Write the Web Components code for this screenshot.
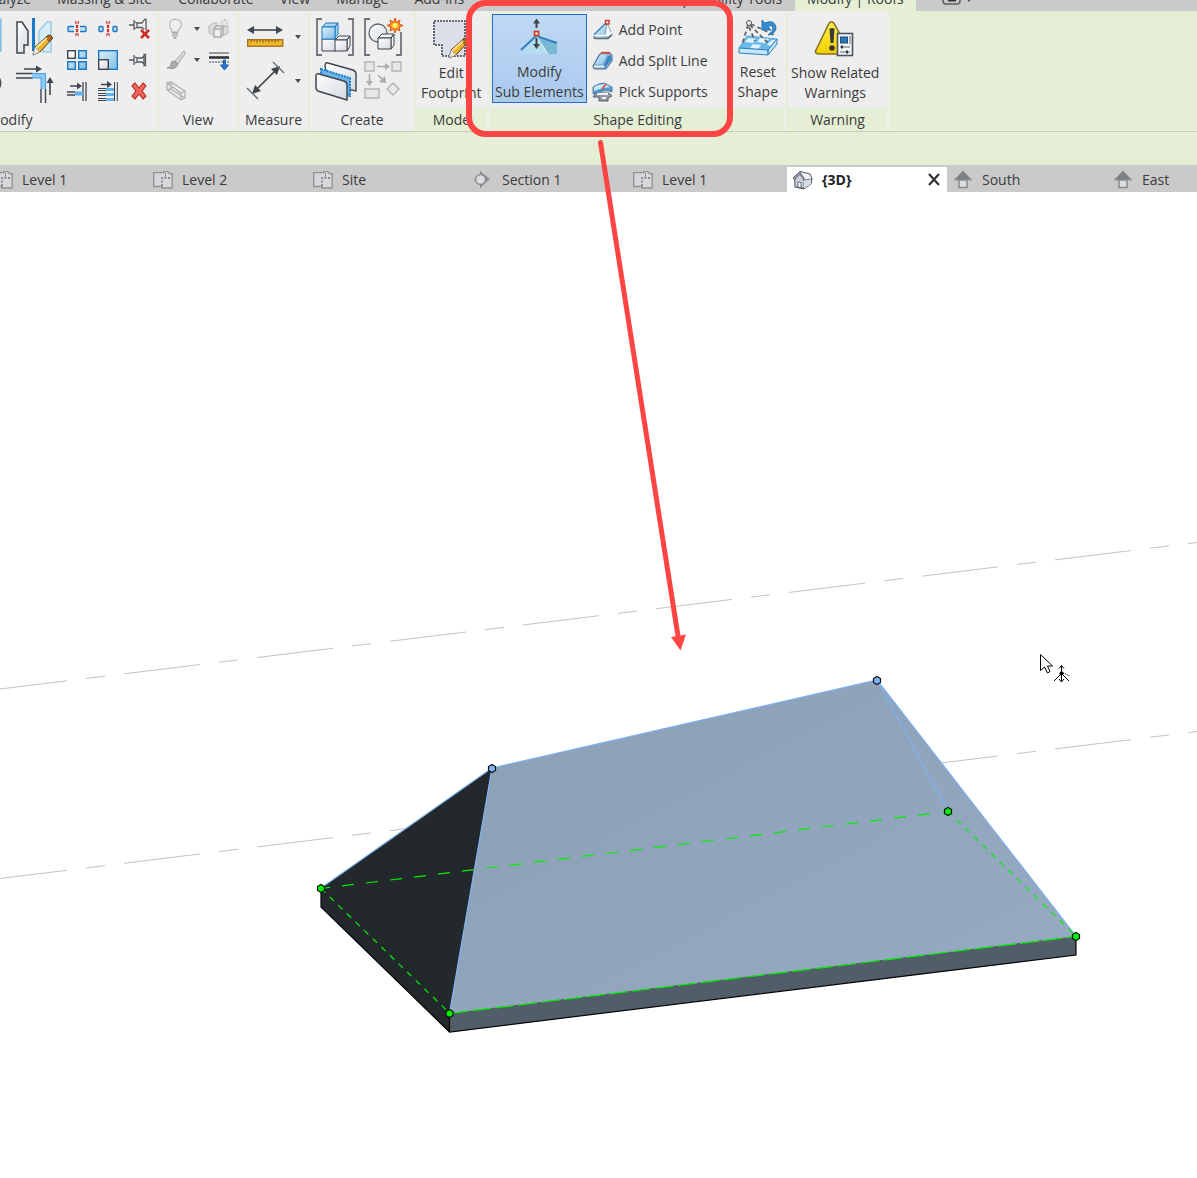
<!DOCTYPE html>
<html lang="en"><head><meta charset="utf-8"><title>Modify | Roofs</title>
<style>
html,body{margin:0;height:100%}
body{font-family:"Open Sans","Noto Sans",sans-serif;font-size:14px;line-height:20px;color:#3b3b3b;overflow:hidden;background:#fff}
</style></head><body>
<revit-app></revit-app>
<script>
const shared=`*{box-sizing:border-box}button{font:inherit;color:inherit;background:none;border:0;padding:0;margin:0;cursor:pointer}svg{display:block;overflow:visible}`;
function define(name,html,css){
  const t=document.createElement('template');
  t.innerHTML='<style>'+shared+css+'</style>'+html;
  customElements.define(name,class extends HTMLElement{
    constructor(){super();this.attachShadow({mode:'open'}).append(t.content.cloneNode(true));}
  });
}
const D='#3f454d',B='#1b78c8';
const defs=`<defs>
<linearGradient id="b" x1="0" y1="0" x2="1" y2="1"><stop offset="0" stop-color="#dff0fa"/><stop offset="1" stop-color="#7fbde3"/></linearGradient>
<linearGradient id="w" x1="0" y1="0" x2="1" y2="1"><stop offset="0" stop-color="#fff"/><stop offset="1" stop-color="#d5d9df"/></linearGradient>
<linearGradient id="y" x1="0" y1="0" x2="0" y2="1"><stop offset="0" stop-color="#fff04a"/><stop offset="1" stop-color="#f3cf00"/></linearGradient></defs>`;
const pencil=`<path d="M17 38l2-8L32 18.500q3-1 4.500 3L24 35z" fill="#f2b32c" stroke="#4b3f2e"/><path d="M29.500 21l2.800-2.700q3.500-.5 4.200 3.200l-3 3z" fill="#b56a24" stroke="#4b3f2e"/><path d="M20 31l11-10" stroke="#ffe38c" stroke-width="2"/><path d="M17 38l2-8 5 5z" fill="#f7f3e8" stroke="#999"/>`;
const ICONS={
edgeblue:[4,36,`<rect x="-6" y="2" width="7" height="32" fill="url(#b)" stroke="#6db2e2"/>`],
edgering:[4,30,`<circle cx="-8" cy="14" r="8" fill="none" stroke="#50565e" stroke-width="3"/>`],
mirror:[38,40,`<path d="M1 5h5l6 9v14H8v8H1z" fill="url(#w)" stroke="${D}" stroke-width="1.500"/><path d="M35 5h-4l-8 9v14h4v7h8z" fill="#d9edf7" stroke="#9bcbe2" stroke-width="1.500"/><path d="M17.500 1v33" stroke="${B}" stroke-width="3"/>${pencil}`],
trim:[38,38,`<path d="M8 4h14M34 30V16" stroke="${D}" stroke-width="1.600" fill="none"/><path d="M20 .500l6 3.500-6 3.500zM30.500 18l3.500-6 3.500 6z" fill="${D}"/><path d="M0 8.500h17M0 13h17M25 24v14M29.500 24v14" stroke="${D}" stroke-width="1.400"/><path d="M16 10.700h11.300V24" fill="none" stroke="#4fa8ea" stroke-width="5.500"/><path d="M16 10.700h11.300V24" fill="none" stroke="#93cdf6" stroke-width="3"/>`],
split:[20,20,`<path d="M7 7.500H2q-1 0-1 1v3q0 1 1 1h5M13 7.500h5q1 0 1 1v3q0 1-1 1h-5" fill="#bfe0f3" stroke="${B}" stroke-width="1.400"/><path d="M8.500 2l1 5v6l-1 5M11.500 2l-1 5v6l1 5" stroke="#d2302a" fill="none" stroke-width="1.200" stroke-dasharray="3 1"/>`],
splitgap:[20,20,`<rect x="1" y="7.500" width="4" height="5" rx="1" fill="#bfe0f3" stroke="${B}" stroke-width="1.400"/><rect x="15" y="7.500" width="4" height="5" rx="1" fill="#bfe0f3" stroke="${B}" stroke-width="1.400"/><path d="M8.500 2l1 5v6l-1 5M11.500 2l-1 5v6l1 5" stroke="#d2302a" fill="none" stroke-width="1.200" stroke-dasharray="3 1"/>`],
unpin:[20,20,`<path d="M0 6h5M5 1v10M6 3l2 1h5l2-3M6 9.500l2-1h5l2 2M15 .500h2v11M8 4v4.500" fill="none" stroke="#555a60" stroke-width="1.300"/><path d="M12 11l8 8M20 11l-8 8" stroke="#c92d26" stroke-width="2.500"/>`],
pin:[20,20,`<path d="M0 10h5M5 5v10M6 7l2 1h5l2-2M6 13l2-1h5l2 2M8 8v4M15 4.500h1.500v11H15z" fill="none" stroke="#555a60" stroke-width="1.300"/>`],
array:[20,20,`<rect x=".700" y=".700" width="7.600" height="7.600" fill="#f6f7fa" stroke="${D}" stroke-width="1.400"/><path d="M11.700.700h7.600v7.600h-7.600zM.700 11.700h7.600v7.600H.700zM11.700 11.700h7.600v7.600h-7.600z" fill="url(#b)" stroke="${B}" stroke-width="1.400"/>`],
scale:[20,20,`<rect x=".700" y=".700" width="18.600" height="18.600" fill="url(#b)" stroke="${B}" stroke-width="1.400"/><rect x=".700" y="9.700" width="9.600" height="9.600" fill="url(#w)" stroke="${D}" stroke-width="1.400"/>`],
extend:[20,20,`<path d="M3 5h9" stroke="${D}" stroke-width="1.500"/><path d="M10 1.500l5 3.500-5 3.500z" fill="${D}"/><path d="M16 1v19M19 1v19M0 11h8M0 14h8" stroke="${D}" stroke-width="1.300"/><path d="M8 12.500h8" stroke="#62b4ee" stroke-width="4"/>`],
extendm:[20,20,`<path d="M3 3.500h8" stroke="${D}" stroke-width="1.500"/><path d="M9 0l5 3.500L9 7z" fill="${D}"/><path d="M16.500 1v19M19.300 1v19M0 7.500h8M0 9.500h8M0 12.500h8M0 14.500h8M0 17.500h8M0 19.500h8" stroke="${D}"/><path d="M8 8.500h8M8 13.500h8M8 18.500h8" stroke="#62b4ee" stroke-width="2.800"/>`],
del:[20,20,`<path d="M3 5l3-3 4 5 4-5 3 3-4 5 4 5-3 3-4-5-4 5-3-3 4-5z" fill="#f0665c" stroke="#bb2d27" stroke-width="1.200" stroke-linejoin="round"/>`],
bulb:[20,20,`<path d="M6 13q0-3-2-4-2-8 5-9 8 1 6 8-3 2-3 5z" fill="#eee" stroke="#c0c0c0" stroke-width="1.400"/><path d="M6 14h6M6 16.500h6M7.500 19h3" fill="none" stroke="#b0b0b0" stroke-width="1.800"/>`],
brush:[20,20,`<path d="M9 11L18 1l1.500 2L12 14z" fill="#d7d7d7" stroke="#aaa"/><path d="M1 18q4-1 4-4t3-3l4 3q-1 4-5 4.500z" fill="#aaa" stroke="#999"/>`],
ghostbox:[20,20,`<path d="M1 2l4-1 14 9v7l-4 2L1 9zM1 2l14 10 4-2M15 12v7M5 1v7l14 9M5 8l-4 1" fill="#e4e4e4" fill-opacity=".5" stroke="#b1b1b1" stroke-width="1.300" stroke-linejoin="round"/>`],
displace:[20,20,`<path d="M0 7l4-3h4v11l-4 1-4-2zM13 9l6-2v7l-5 3" fill="#dcdcdc" stroke="#b8b8b8"/><path d="M5 10l2-3h7l-2 3zM5 10h7v8H5zM12 10l2-3v8l-2 3" fill="#eee" stroke="#aaa" stroke-width="1.300"/><path d="M15.500 0v8M11.500 4h8M12.500 1l6 6M18.500 1l-6 6" stroke="#bbb"/><circle cx="15.500" cy="4" r="2" fill="#e8e8e8"/>`],
thin:[20,20,`<path d="M0 3h20" stroke="${D}"/><path d="M0 7.500h20" stroke="#30353b" stroke-width="2.600"/><path d="M0 12h20" stroke="${D}" stroke-dasharray="2 1"/><path d="M14.500 10v5h-3l4 5 4-5h-3v-5z" fill="#2877d8" stroke="#1759ad"/>`],
ruler:[38,26,`<path d="M5 6h26" stroke="${D}" stroke-width="1.600"/><path d="M7 2L0 6l7 4zM29 2l7 4-7 4z" fill="${D}"/><rect x=".700" y="15.700" width="35" height="6.500" fill="#f4ba2c" stroke="#a1731a" stroke-width="1.400"/><path d="M4 16v3M7 16v2M10 16v3M13 16v2M16 16v3M19 16v2M22 16v3M25 16v2M28 16v3M31 16v2" stroke="#8c6519"/>`],
aligned:[38,38,`<path d="M7 30L31 6" stroke="${D}" stroke-width="1.600"/><path d="M5 32l3-9 6 6zM33 4l-9 3 6 6z" fill="${D}"/><path d="M0 26l11 11M26 0l11 11" stroke="#656a71" stroke-width="1.400"/>`],
assembly:[38,38,`<path d="M6 1H1v36h5M32 1h5v36h-5" fill="none" stroke="#6d737b" stroke-width="1.800"/><path d="M6 21h14v12H6z" fill="url(#w)" stroke="${D}"/><path d="M6 9l4-4h12l-3 4zM19 9l3-4v11l-3 4z" fill="#a5d6f0" stroke="${B}"/><path d="M6 9h13v12H6z" fill="url(#b)" stroke="${B}"/><path d="M19 22l4-4h11l-3 4zM31 22l3-4v10l-3 5z" fill="#f5f6f8" stroke="${D}"/><path d="M19 22h12v11H19z" fill="url(#w)" stroke="${D}"/>`],
group:[38,38,`<path d="M6 1H1v36h5M37 14v23h-5" fill="none" stroke="#6d737b" stroke-width="1.800"/><circle cx="14" cy="15" r="9" fill="url(#w)" stroke="#5e646c" stroke-width="1.300"/><path d="M14 20l4-4h12l-3 4zM27 20l3-4v11l-3 4z" fill="#f3f4f7" stroke="${D}"/><path d="M14 20h13v11H14z" fill="url(#w)" stroke="${D}"/><path d="M31 0l1.500 4.500L36 2l-1 4 4 1.500-4 1.500 1 4-3.500-2L31 15l-1.500-4L26 13l1-4-4-1.500L27 6l-1-4 3.500 2.500z" fill="#ff9b1f" stroke="#d95518"/><circle cx="31" cy="7.500" r="2.500" fill="#fff16e"/>`],
parts:[40,40,`<path d="M9 5q0-4 3-3l25 7q3 1 3 4v17L13 24z" fill="url(#w)" stroke="${D}" stroke-width="1.400"/><path d="M5 8l29 9v18L5 27z" fill="#69b6e9" stroke="${B}" stroke-width="2" stroke-dasharray="2 1"/><path d="M0 15q0-3 3-2l25 7q3 1 3 4v15L2 30q-2-1-2-3z" fill="url(#w)" stroke="${D}" stroke-width="1.500"/>`],
similar:[38,38,`<g fill="#e8e8e8" stroke="#b4b4b4" stroke-width="1.400"><path d="M1 1h9v9H1zM28 1h9v9h-9zM1 28h14v9H1zM29 22l6 6-6 6-6-6z"/></g><path d="M13 5.500h10M5.500 13v9M14 14l6 6" stroke="#aaa" stroke-width="1.600"/><path d="M21 2l5 3.500L21 9zM2 20h7l-3.500 5zM22 22l-1-7-6 6z" fill="#aaa"/>`],
footprint:[38,38,`<path d="M2 1h31v35H10V25H2z" fill="#dcdfe8" stroke="${D}" stroke-width="1.600" stroke-dasharray="2 1"/>${pencil}`],
sub:[38,38,`<g transform="translate(1)"><path d="M0 35L16 19l20 5v11z" fill="#b4deef"/><path d="M16 19l11 16h9V24z" fill="#79bad2"/><path d="M0 31l15-14 21 7" fill="none" stroke="#2d83c6" stroke-width="2"/><path d="M16 18l11 17" stroke="#e6f6fb"/><rect x="13.500" y="12.500" width="4" height="4" fill="#fff" stroke="#d34128" stroke-width="1.800"/><path d="M15.500 9V3M15.500 19v8" stroke="${D}" stroke-width="2"/><path d="M12 4.500L15.500-.5 19 4.500zM12 25l3.500 5 3.500-5z" fill="${D}"/></g>`],
point:[20,20,`<path d="M1 15L13 3l6 11-4 4H3q-2 0-2-3z" fill="url(#b)"/><path d="M14 3l5 11-4 3-3-1z" fill="#f4f9fc" stroke="#657b8c" stroke-width=".700"/><path d="M1 16.500q0 2 2 2h12l4-4" fill="none" stroke="#5c666f" stroke-width="1.600"/><path d="M2 15.500h13l4-3" stroke="#fafafa" stroke-width="1.400"/><path d="M1 14.500L13 3" stroke="#327eb5" stroke-width="1.300"/><rect x="12.500" y=".500" width="3.500" height="3.500" fill="#fff" stroke="#c93326" stroke-width="1.400"/>`],
splitline:[20,20,`<path d="M0 15L6 4q1-2 3-2h8l2 2v6l-6 8H2q-2 0-2-3z" fill="#8cbce2" stroke="#46647e"/><path d="M1 14L7 4q1-1 2-1h6l-5 11z" fill="url(#b)" stroke="#5c98c8" stroke-width=".700"/><path d="M11 14l4-9 3-1v5l-6 8z" fill="#3e86c4"/><path d="M1 15.500h10" stroke="#f2f6fa" stroke-width="1.600"/><path d="M8 1.700h9" stroke="#df4b38" stroke-width="1.800"/>`],
supports:[20,20,`<path d="M3 11h13l3 3-4 2v3H6v-4H0z" fill="#929aa3" stroke="#59626c"/><path d="M4 12h11M9 16h4" stroke="#f3f5f7" stroke-width="1.800"/><path d="M0 5q6-4 11-4l8 4v5q-4-2-8-1L0 12z" fill="#4e9ad4" stroke="#4d6c88" stroke-width=".800"/><path d="M1 5q5-3 10-3l7 3-8 1-9 3z" fill="#cbe7f6"/><path d="M9 7l4-5" stroke="#dd4935" stroke-width="1.600"/>`],
reset:[40,38,`<path d="M1 29l8-12 30 3-9 11z" fill="#6db8e8" stroke="#5ba9d8"/><path d="M10 19l8 1-3 4-8-1zM22 19l9 1-4 4-8-1zM15 25l8 1-3 4-8-1zM29 25l5-4 4 0-6 6z" fill="#e0f2fb"/><path d="M1 29l29 2v5L1 34zM30 31l9-11v5l-9 11z" fill="#c5e6f6" stroke="#2b82c0"/><path d="M10 6L4 26M12 6l18 18M13 5l25 12M11 8l6 14" stroke="#5e6267" stroke-width="1.800" stroke-dasharray="4 3"/><circle cx="11" cy="4" r="2.500" fill="#eee" stroke="#555"/><path d="M24 1v10h9l-3-3q4-3 5 1 0 4-5 7 8-1 8-8-2-8-11-4z" fill="#338ed2" stroke="#2775b3"/>`],
warn:[40,38,`<path d="M14 3.500Q16.500 0 19 3.500L34 30q1 4-3 4H3q-4-1-2-4z" fill="url(#y)" stroke="#816f27" stroke-width="1.500"/><path d="M14.500 9q3-2 5 0l-1 14h-3z" fill="#393939"/><circle cx="17" cy="28" r="2.800" fill="#393939"/><rect x="22.500" y="13.500" width="15" height="22" fill="#f4f6fa" stroke="#4b5361" stroke-width="1.600"/><rect x="25.500" y="17" width="7" height="6" fill="#2a73b5" stroke="#1f4e7b"/><path d="M35 16v8M25 27h10M25 32h10" stroke="#596273"/><path d="M27 25.500v3M32 30.500v3" stroke="#333" stroke-width="2"/>`],
drop:[8,6,`<path d="M0 1h6L3 5z" fill="#4b4b4b"/>`],
plan:[20,18,`<path d="M.700 1.700h10v-1h4l2 2h2.500V17H9v-1.500H.700z" fill="#d6d8da" stroke="#8f9297" stroke-width="1.300"/><path d="M9 15V7h10" fill="none" stroke="#73777c" stroke-width="1.400" stroke-dasharray="2 1.500"/><path d="M12.500 2v5" stroke="#8f9297"/>`],
section:[20,18,`<path d="M8 1l9 7-9 8z" fill="#898c91"/><circle cx="7.500" cy="8.500" r="5" fill="#dcdddf" stroke="#8d9094" stroke-width="1.400"/><path d="M1 8.500h2M7.500 0v3M7.500 14v3" stroke="#85888c"/>`],
house:[20,20,`<path d="M7 1.500L17 4l2 5-1 5-7 5-9-2V10L0 8z" fill="#9aa2ae" stroke="#515a66" stroke-linejoin="round"/><path d="M7 1.500L17 4l2 5-7 1-5-8z" fill="#eef0f3" stroke="#515a66" stroke-width=".800" stroke-linejoin="round"/><path d="M2 9l5-5 4 6v8l-9-1z" fill="#c8cfd9" stroke="#515a66" stroke-width=".800"/><path d="M11 10.500l7-1V14l-7 4.500z" fill="#d8dde5"/><path d="M5 17v-5l3 .5V18z" fill="#fff" stroke="#424a55" stroke-width=".800"/>`],
elev:[20,18,`<path d="M10 0l9 9H1z" fill="#7e8185" stroke="#95979a"/><path d="M6 9h8v7.500H6z" fill="#dedfe0" stroke="#85888c" stroke-width="1.500"/>`],
close:[14,14,`<path d="M2 1l10 11M12 1L2 12" stroke="#333" stroke-width="2.200"/>`],
pick:[18,12,`<rect x="1" y="-3" width="17" height="13" rx="3" fill="none" stroke="#5d5d5d" stroke-width="1.500"/><path d="M6 6.500h8" stroke="#333" stroke-width="2"/>`]
};
customElements.define('ui-icon',class extends HTMLElement{
  connectedCallback(){
    if(this.shadowRoot)return;
    const [w,h,p]=ICONS[this.getAttribute('name')];
    this.attachShadow({mode:'open'}).innerHTML=`<style>:host{display:block;flex:none;width:${w}px;height:${h}px}svg{display:block;overflow:visible}</style><svg width="${w}" height="${h}" fill="none" aria-hidden="true">${defs}${p}</svg>`;
  }
});
define('icon-button','<button><slot></slot></button>',':host{display:block}button{display:block}');
define('ribbon-tab','<button role="tab"><slot></slot></button>',`:host{display:flex;justify-content:flex-end;height:30px}button{display:block;height:30px;padding:4px 13px 6px;white-space:nowrap}:host([active]) button{background:#e5efd5;padding:4px 12px 6px}`);
define('ribbon-tabs','<nav><slot></slot></nav>',`:host{display:block;height:11px;overflow:hidden;background:#cacaca}nav{display:flex;margin:-15px 0 0 -32px}`);
define('ribbon-panel','<section><div><slot></slot></div><footer><slot name="title"></slot></footer></section>',`:host{display:block;flex:none;border-right:2px solid #e5efd5}section{height:120px;display:flex;flex-direction:column;background:#eee}div{flex:1;display:flex}footer{height:23px;line-height:24px;text-align:center}:host([context]) footer{background:#e5efd5;margin-right:2px}`);
define('big-tool','<button><slot name="icon"></slot><span><slot></slot></span></button>',`:host{display:block}button{display:flex;flex-direction:column;align-items:center;gap:5px;height:90px;padding:5px 2px 0;white-space:nowrap;border:1px solid transparent}span{text-align:center;width:max-content}:host([pressed]) button{height:89px;padding-top:4px;background:linear-gradient(#bfd8f4,#abcaef);border-color:#1e6fc4}`);
define('row-tool','<button><slot name="icon"></slot><slot></slot></button>',`:host{display:block}button{display:flex;align-items:center;gap:6px;height:31px;white-space:nowrap}`);
define('doc-tab','<div><button><slot name="icon"></slot><slot></slot></button><slot name="close"></slot></div>',`:host{display:block;flex:none;width:160px;padding-top:2px}div{height:25px;display:flex;align-items:center;justify-content:space-between;padding:0 6px}button{display:flex;align-items:center;gap:9px;height:25px}:host([active]) div{background:#fff;font-weight:700;color:#222}`);
define('doc-tabs','<nav><slot></slot></nav>',`:host{display:block;height:27px;background:#cacaca;overflow:hidden}nav{display:flex;margin-left:-13px}`);
const dots=[[492,768,0],[877,680,0],[321,888,1],[948,811,1],[449.5,1013,1],[1076,936,1]].map(([x,y,c])=>`<path d="M${x-3.5} ${y-1.500}L${x} ${y-3.500}L${x+3.5} ${y-1.500}V${y+2.500}L${x} ${y+4.500}L${x-3.5} ${y+2.500}z" fill="${c?'#00f000':'#80b2f5'}"/>`).join('');
define('roof-view',`<svg viewBox="0 192 1197 986" preserveAspectRatio="xMinYMin slice" role="img" aria-label="3D roof">
<defs><linearGradient id="r" x1="0" y1="0" x2="1" y2="1"><stop offset="0" stop-color="#8b9fb4"/><stop offset="1" stop-color="#96abc4"/></linearGradient></defs>
<g stroke="#c4c4c4" fill="none" stroke-dasharray="76 19 19 19" stroke-dashoffset="9"><path pathLength="1197" d="M0 689L1197 542.500"/><path pathLength="1197" d="M0 878.500L1197 731.500"/></g>
<path d="M321 888L492 768 449.500 1013V1032L321 907z" fill="#23282c"/><path d="M492 768L877 680 1076 936 449.500 1013z" fill="url(#r)"/><path d="M449.500 1013L1076 936V955L449.500 1032z" fill="#515d69"/>
<path d="M321 888V907L449.500 1032 1076 955V936M449.500 1013v19" fill="none" stroke="#050505" stroke-width="1.200"/><path d="M321 888L492 768 449.500 1013M492 768L877 680 1076 936M877 680l71 131" fill="none" stroke="#7eb2f0" stroke-width="1.200"/>
<g stroke="#00f000" stroke-width="1.200" fill="none"><path pathLength="627" d="M321 888.500L948 811.500" stroke-dasharray="12 12" stroke-dashoffset="3"/><path d="M321 888.500L449.500 1013" stroke-dasharray="6 6"/><path d="M948 811.500L1076 936" stroke-dasharray="6 6"/><path d="M449.500 1013.500L1076 936.500" stroke-dasharray="19 4"/></g>
<g stroke="#111" stroke-width="1.200">${dots}</g>
<path d="M1040.500 654.500v16l4-3.500 3 6 2.500-1.500-2.500-5.500h5z" fill="#fff" stroke="#000"/><path d="M1061.500 666v15M1059 668.500l2.500-3 2.500 3M1059 679l2.500 3 2.500-3M1054 681l7-7M1069 681l-7-7" stroke="#000" fill="none"/><path d="M1063 673l7 3" stroke="#000" stroke-dasharray="1 1"/><circle cx="1061.500" cy="673.500" r="2" fill="#000"/>
</svg>`,`:host{display:block;flex:1;min-height:0;background:#fff;overflow:hidden}svg{width:100%;height:100%}`);
define('callout-layer',`<svg width="1197" height="700" aria-hidden="true"><rect x="469" y="3" width="261" height="131" rx="17" fill="none" stroke="#ff4444" stroke-width="6"/><path d="M600.500 142.500L678 636" stroke="#ff4444" stroke-width="5" stroke-linecap="round"/><path d="M671 637l15-2.500-5.500 16z" fill="#ff4444"/></svg>`,`:host{display:block;position:absolute;inset:0;pointer-events:none;overflow:hidden}`);
const ic=(n,s='')=>`<ui-icon name="${n}" ${s}></ui-icon>`;
const ib=n=>`<icon-button aria-label="${n}">${ic(n)}</icon-button>`;
define('revit-app',`
<ribbon-tabs>${['Analyze','Massing &amp; Site','Collaborate','View','Manage','Add-Ins'].map(t=>`<ribbon-tab>${t}</ribbon-tab>`).join('')}<ribbon-tab class="wide">BIM Interoperability Tools</ribbon-tab><ribbon-tab active>Modify | Roofs</ribbon-tab><div class="pick">${ib('pick')}${ib('drop')}</div></ribbon-tabs>
<div class="ribbon">
<ribbon-panel class="modify"><div class="col edge">${ib('edgeblue')}${ib('edgering')}</div><div class="col pair">${ib('mirror')}${ib('trim')}</div><div class="grid3">${['split','splitgap','unpin','array','scale','pin','extend','extendm','del'].map(ib).join('')}</div><span slot="title">Modify</span></ribbon-panel>
<ribbon-panel class="view"><div class="gridv">${ib('bulb')}${ib('drop')}${ib('displace')}${ib('brush')}${ib('drop')}${ib('thin')}${ib('ghostbox')}</div><span slot="title">View</span></ribbon-panel>
<ribbon-panel class="measure"><div class="gridm">${ib('ruler')}${ib('drop')}${ib('aligned')}${ib('drop')}</div><span slot="title">Measure</span></ribbon-panel>
<ribbon-panel class="create"><div class="gridc">${ib('assembly')}${ib('group')}${ib('parts')}${ib('similar')}</div><span slot="title">Create</span></ribbon-panel>
<ribbon-panel context class="mode"><big-tool>${ic('footprint','slot="icon"')}Edit<br>Footprint</big-tool><span slot="title">Mode</span></ribbon-panel>
<ribbon-panel context class="shape"><big-tool class="subtool" pressed>${ic('sub','slot="icon"')}Modify<br>Sub Elements</big-tool><div class="rows"><row-tool>${ic('point','slot="icon"')}Add Point</row-tool><row-tool>${ic('splitline','slot="icon"')}Add Split Line</row-tool><row-tool>${ic('supports','slot="icon"')}Pick Supports</row-tool></div><big-tool class="reset">${ic('reset','slot="icon"')}Reset<br>Shape</big-tool><span slot="title">Shape Editing</span></ribbon-panel>
<ribbon-panel context class="warning"><big-tool>${ic('warn','slot="icon"')}Show Related<br>Warnings</big-tool><span slot="title">Warning</span></ribbon-panel>
</div><div class="options"></div>
<doc-tabs>${[['plan','Level 1'],['plan','Level 2'],['plan','Site'],['section','Section 1'],['plan','Level 1'],['house','{3D}'],['elev','South'],['elev','East']].map(([i,t])=>`<doc-tab ${i=='house'?'active':''}>${ic(i,'slot="icon"')}${t}${i=='house'?`<icon-button slot="close" aria-label="Close">${ic('close')}</icon-button>`:''}</doc-tab>`).join('')}</doc-tabs>
<roof-view></roof-view><callout-layer></callout-layer>`,
`:host{display:flex;flex-direction:column;height:100vh;position:relative;overflow:hidden}
.wide{width:318px}
.pick{display:flex;gap:6px;align-items:center;padding-left:26px}
.ribbon{display:flex;background:#e5efd5;height:121px;border-bottom:1px solid #c6cdbc;flex:none}
.options{height:33px;background:#e5efd5;flex:none}ribbon-tabs,doc-tabs{flex:none}
.modify{width:296px;margin-left:-137px}.view{width:80px}.measure{width:71px}.create{width:106px}.mode{width:75px}.shape{width:297px}.warning{width:103px}
.edge{padding:6px 0 0 137px;display:flex;flex-direction:column;gap:16px}
.pair{padding:6px 0 0 12px;display:flex;flex-direction:column;gap:8px}
.grid3{display:grid;grid-template-columns:repeat(3,20px);gap:11px;padding:8px 0 0 13px;align-content:start}
.gridv{display:grid;grid-template-columns:20px 7px 20px;gap:11px 8px;padding:8px 0 0 7px;align-content:start;align-items:center}
.gridm{display:grid;grid-template-columns:38px 7px;gap:12px 10px;padding:13px 0 0 8px;align-items:center;align-content:start}
.gridc{display:grid;grid-template-columns:38px 38px;gap:5px 10px;padding:7px 0 0 6px;align-content:start}
.mode big-tool{padding:3px 0 0 2px}.warning big-tool{padding:3px 0 0}
.subtool{padding:3px 0 0 1px}.rows{padding:3px 0 0 6px}.reset{padding:2px 0 0 27px}`);
</script></body></html>
